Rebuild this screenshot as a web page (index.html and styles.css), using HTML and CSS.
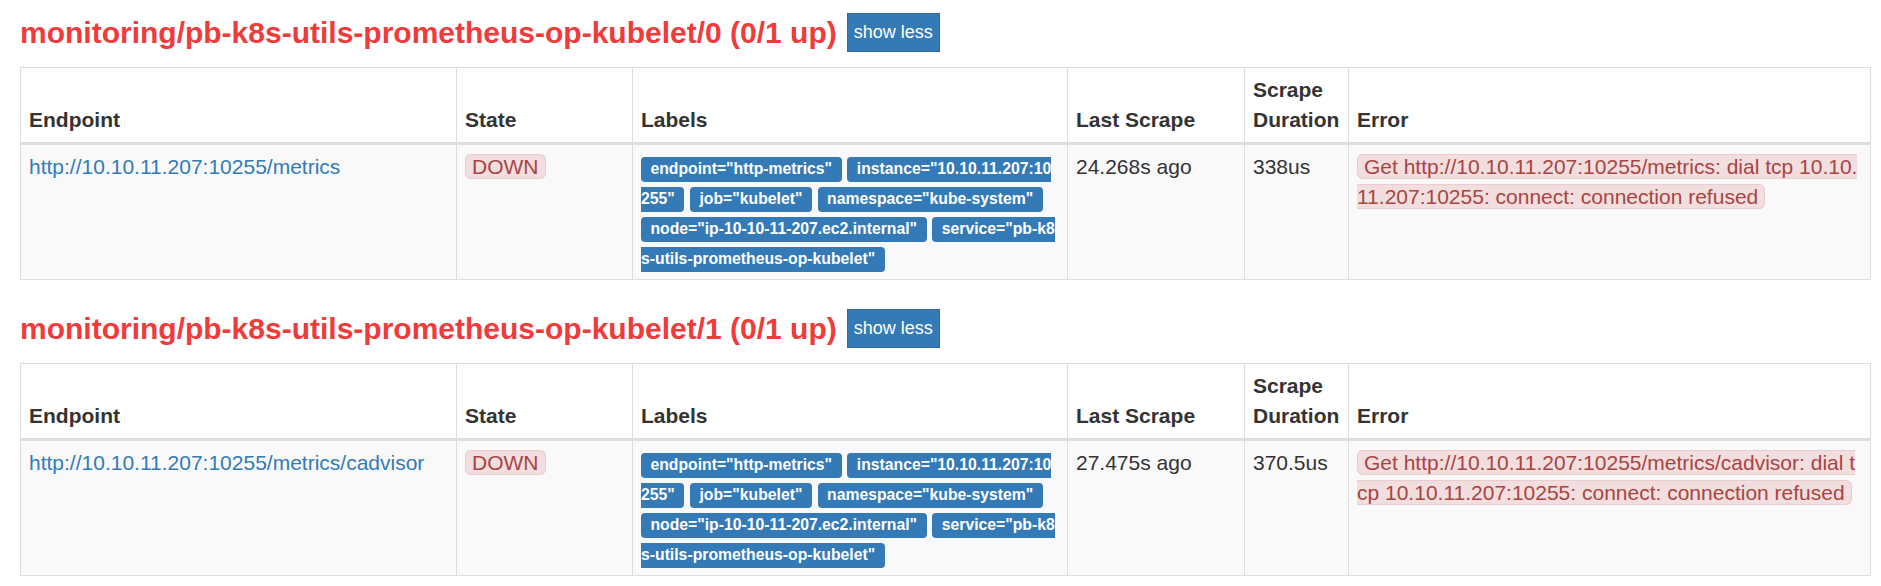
FILE: index.html
```html
<!DOCTYPE html>
<html lang="en">
<head>
<meta charset="utf-8">
<title>Targets</title>
<link rel="stylesheet" href="styles.css">
</head>
<body>
<div class="container">
  <section class="job">
    <h2 class="job-heading">
      <a href="#job-0" class="job-link danger">monitoring/pb-k8s-utils-prometheus-op-kubelet/0 (0/1 up)</a>
      <button type="button" class="btn btn-primary">show less</button>
    </h2>
    <table class="targets">
      <colgroup>
        <col class="c-endpoint"><col class="c-state"><col class="c-labels"><col class="c-last"><col class="c-dur"><col class="c-error">
      </colgroup>
      <thead>
        <tr><th>Endpoint</th><th>State</th><th>Labels</th><th>Last Scrape</th><th>Scrape Duration</th><th>Error</th></tr>
      </thead>
      <tbody>
        <tr>
          <td><a href="#">http://10.10.11.207:10255/metrics</a></td>
          <td><span class="state-indicator">DOWN</span></td>
          <td class="labels"><span class="label">endpoint="http-metrics"</span> <span class="label">instance="10.10.11.207:10255"</span> <span class="label">job="kubelet"</span> <span class="label">namespace="kube-system"</span> <span class="label">node="ip-10-10-11-207.ec2.internal"</span> <span class="label">service="pb-k8s-utils-prometheus-op-kubelet"</span></td>
          <td>24.268s ago</td>
          <td>338us</td>
          <td class="error"><span class="state-indicator">Get http://10.10.11.207:10255/metrics: dial tcp 10.10.11.207:10255: connect: connection refused</span></td>
        </tr>
      </tbody>
    </table>
  </section>

  <section class="job">
    <h2 class="job-heading">
      <a href="#job-1" class="job-link danger">monitoring/pb-k8s-utils-prometheus-op-kubelet/1 (0/1 up)</a>
      <button type="button" class="btn btn-primary">show less</button>
    </h2>
    <table class="targets">
      <colgroup>
        <col class="c-endpoint"><col class="c-state"><col class="c-labels"><col class="c-last"><col class="c-dur"><col class="c-error">
      </colgroup>
      <thead>
        <tr><th>Endpoint</th><th>State</th><th>Labels</th><th>Last Scrape</th><th>Scrape Duration</th><th>Error</th></tr>
      </thead>
      <tbody>
        <tr>
          <td><a href="#">http://10.10.11.207:10255/metrics/cadvisor</a></td>
          <td><span class="state-indicator">DOWN</span></td>
          <td class="labels"><span class="label">endpoint="http-metrics"</span> <span class="label">instance="10.10.11.207:10255"</span> <span class="label">job="kubelet"</span> <span class="label">namespace="kube-system"</span> <span class="label">node="ip-10-10-11-207.ec2.internal"</span> <span class="label">service="pb-k8s-utils-prometheus-op-kubelet"</span></td>
          <td>27.475s ago</td>
          <td>370.5us</td>
          <td class="error"><span class="state-indicator">Get http://10.10.11.207:10255/metrics/cadvisor: dial tcp 10.10.11.207:10255: connect: connection refused</span></td>
        </tr>
      </tbody>
    </table>
  </section>
</div>
</body>
</html>
```

FILE: styles.css
```css
* { box-sizing: border-box; }

html, body {
  margin: 0;
  padding: 0;
  background: #fff;
}

body {
  font-family: "Liberation Sans", Arial, Helvetica, sans-serif;
  font-size: 21px;
  line-height: 30px;
  color: #333;
}

.container {
  padding: 0 11px 0 20px;
}

.job-heading {
  display: flex;
  align-items: center;
  gap: 10px;
  margin: 13px 0 15px;
  font-size: 30px;
  font-weight: bold;
  line-height: 33px;
}

.job-link {
  text-decoration: none;
}

.job-link.danger {
  color: #ef3b3b;
}

.btn {
  font-family: inherit;
  font-size: 18px;
  font-weight: normal;
  line-height: 27px;
  padding: 5px 6px;
  border: 1px solid #2e6da4;
  border-radius: 0;
  color: #fff;
  background: #337ab7;
  cursor: pointer;
}

.targets {
  width: 1850px;
  table-layout: fixed;
  border-collapse: collapse;
  border-spacing: 0;
  margin-bottom: 29px;
  border: 1px solid #ddd;
}

.c-endpoint { width: 436px; }
.c-state { width: 176px; }
.c-labels { width: 435px; }
.c-last { width: 177px; }
.c-dur { width: 104px; }
.c-error { width: 522px; }

.targets th,
.targets td {
  border: 1px solid #ddd;
  padding: 7px 8px;
  text-align: left;
}

.targets th {
  font-weight: bold;
  vertical-align: bottom;
  border-bottom: 3px solid #ddd;
}

.targets td {
  vertical-align: top;
}

.targets tbody tr:nth-of-type(odd) {
  background: #f9f9f9;
}

.targets a {
  color: #337ab7;
  text-decoration: none;
}

.state-indicator {
  padding: 0 6px;
  color: #a94442;
  background: #f2dede;
  border: 1px solid #ebccd1;
  border-radius: 6px;
  word-break: break-all;
}

.label {
  padding: .2em .6em .3em;
  font-size: 75%;
  font-weight: bold;
  line-height: 1;
  color: #fff;
  background: #337ab7;
  border-radius: .25em;
  word-break: break-all;
}
```
